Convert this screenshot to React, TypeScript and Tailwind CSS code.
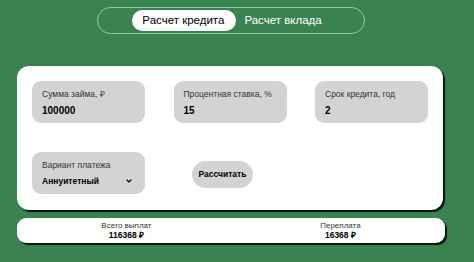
import { ChevronDown } from "lucide-react"

function Field({ label, value }: { label: string; value: string }) {
  return (
    <div className="w-[113px] h-[42px] rounded-[9px] bg-[#d3d3d3] pl-[10px] pt-[8px]">
      <p className="text-[8.5px] leading-[11px] text-[#333]">{label}</p>
      <p className="mt-[5px] text-[10px] leading-[12px] font-bold text-black">{value}</p>
    </div>
  )
}

export default function App() {
  return (
    <div
      className="w-full h-[262px] bg-[#3b8252] flex flex-col overflow-hidden"
      style={{ fontFamily: '"Liberation Sans", Arial, sans-serif' }}
    >
      <div className="ml-[97px] mt-[7px] w-[268px] h-[27px] rounded-full border border-[#8fcf9f] flex items-center justify-center">
        <button className="h-[21px] rounded-full bg-white pl-[10px] pr-[12px] text-[11.5px] text-black">
          Расчет кредита
        </button>
        <button className="h-[21px] rounded-full px-[8px] text-[11.5px] text-white">Расчет вклада</button>
      </div>

      <div className="ml-[17px] mt-[32px] w-[426px] h-[144px] rounded-[12px] bg-white p-[15px] shadow-[2px_2px_1px_rgba(0,0,0,0.85)]">
        <div className="flex justify-between">
          <Field label="Сумма займа, ₽" value="100000" />
          <Field label="Процентная ставка, %" value="15" />
          <Field label="Срок кредита, год" value="2" />
        </div>
        <div className="mt-[29px] flex items-center">
          <div className="w-[113px] h-[42px] rounded-[9px] bg-[#d3d3d3] pl-[10px] pr-[12px] pt-[8px]">
            <p className="text-[8.5px] leading-[11px] text-[#333]">Вариант платежа</p>
            <div className="mt-[4px] flex items-center justify-between">
              <span className="text-[8.5px] leading-[12px] font-bold text-black">Аннуитетный</span>
              <ChevronDown size={8} strokeWidth={3.5} className="text-black" />
            </div>
          </div>
          <button className="ml-[47px] mt-[2px] w-[61px] h-[27px] rounded-full bg-[#d3d3d3] text-[8.5px] font-bold text-black">
            Рассчитать
          </button>
        </div>
      </div>

      <div className="ml-[17px] mt-[8px] w-[428px] h-[25px] rounded-[9px] bg-white flex justify-around items-center shadow-[2px_2px_1px_rgba(0,0,0,0.85)]">
        <div className="text-center">
          <p className="text-[8px] leading-[9px] text-[#333]">Всего выплат</p>
          <p className="text-[8.5px] leading-[10px] font-bold text-black">116368 ₽</p>
        </div>
        <div className="text-center">
          <p className="text-[8px] leading-[9px] text-[#333]">Переплата</p>
          <p className="text-[8.5px] leading-[10px] font-bold text-black">16368 ₽</p>
        </div>
      </div>
    </div>
  )
}
